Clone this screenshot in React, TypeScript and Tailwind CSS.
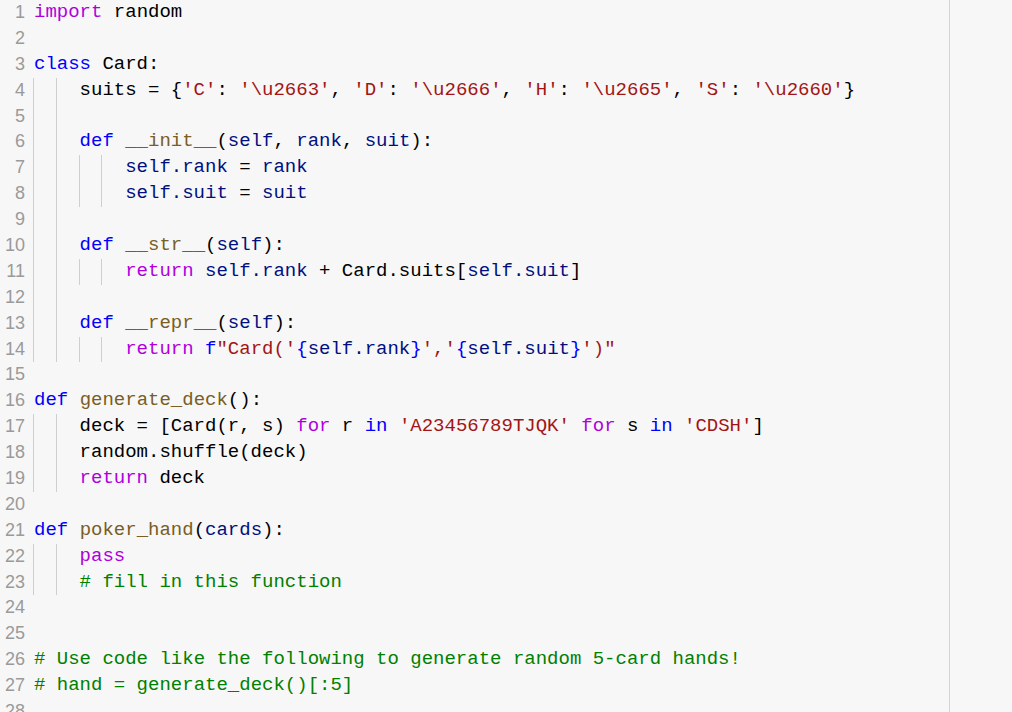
import React from "react"

type Tok = [string, string]

// token colours
const C: Record<string, string> = {
	t: "text-[#000000]",
	k: "text-[#af00db]",
	b: "text-[#0000ff]",
	f: "text-[#795e26]",
	v: "text-[#001080]",
	s: "text-[#a31515]",
	c: "text-[#008000]",
}

// [guides, tokens]
const lines: [number, Tok[]][] = [
	[0, [["k", "import"], ["t", " random"]]],
	[0, []],
	[0, [["b", "class"], ["t", " Card:"]]],
	[2, [["t", "suits = {"], ["s", "'C'"], ["t", ": "], ["s", "'\\u2663'"], ["t", ", "], ["s", "'D'"], ["t", ": "], ["s", "'\\u2666'"], ["t", ", "], ["s", "'H'"], ["t", ": "], ["s", "'\\u2665'"], ["t", ", "], ["s", "'S'"], ["t", ": "], ["s", "'\\u2660'"], ["t", "}"]]],
	[2, []],
	[2, [["b", "def"], ["t", " "], ["f", "__init__"], ["t", "("], ["v", "self"], ["t", ", "], ["v", "rank"], ["t", ", "], ["v", "suit"], ["t", "):"]]],
	[4, [["v", "self.rank"], ["t", " = "], ["v", "rank"]]],
	[4, [["v", "self.suit"], ["t", " = "], ["v", "suit"]]],
	[2, []],
	[2, [["b", "def"], ["t", " "], ["f", "__str__"], ["t", "("], ["v", "self"], ["t", "):"]]],
	[4, [["k", "return"], ["t", " "], ["v", "self.rank"], ["t", " + Card.suits["], ["v", "self.suit"], ["t", "]"]]],
	[2, []],
	[2, [["b", "def"], ["t", " "], ["f", "__repr__"], ["t", "("], ["v", "self"], ["t", "):"]]],
	[4, [["k", "return"], ["t", " "], ["b", "f"], ["s", "\"Card('"], ["b", "{"], ["v", "self.rank"], ["b", "}"], ["s", "','"], ["b", "{"], ["v", "self.suit"], ["b", "}"], ["s", "')\""]]],
	[0, []],
	[0, [["b", "def"], ["t", " "], ["f", "generate_deck"], ["t", "():"]]],
	[2, [["t", "deck = [Card(r, s) "], ["k", "for"], ["t", " r "], ["b", "in"], ["t", " "], ["s", "'A23456789TJQK'"], ["t", " "], ["k", "for"], ["t", " s "], ["b", "in"], ["t", " "], ["s", "'CDSH'"], ["t", "]"]]],
	[2, [["t", "random.shuffle(deck)"]]],
	[2, [["k", "return"], ["t", " deck"]]],
	[0, []],
	[0, [["b", "def"], ["t", " "], ["f", "poker_hand"], ["t", "("], ["v", "cards"], ["t", "):"]]],
	[2, [["k", "pass"]]],
	[2, [["c", "# fill in this function"]]],
	[0, []],
	[0, []],
	[0, [["c", "# Use code like the following to generate random 5-card hands!"]]],
	[0, [["c", "# hand = generate_deck()[:5]"]]],
	[0, []],
]

const App = () => {
	return (
		<div className="relative w-[1012px] h-[712px] overflow-hidden bg-[#f7f7f7]">
			{/* print margin */}
			<div className="absolute top-0 bottom-0 left-[949px] w-px bg-[#d4d4d4]" />

			<div className="flex flex-col">
				{lines.map(([g, toks], i) => (
					<div key={i} className="flex h-[25.9px] items-stretch">
						<div
							className="w-[25px] shrink-0 text-right text-[18px] leading-[25.9px] text-[#9a9a9a]"
							style={{ fontFamily: '"Liberation Sans", Arial, sans-serif' }}
						>
							{i + 1}
						</div>
						<div
							className="ml-[8px] flex items-stretch whitespace-pre text-[19px] leading-[25.9px]"
							style={{ fontFamily: '"Liberation Mono", "Courier New", monospace' }}
						>
							{Array.from({ length: g }).map((_, j) => (
								<span key={j} className="w-[2ch] border-l border-[#cfcfcf]" />
							))}
							<span className="pl-px">
								{toks.map(([k, t], j) => (
									<span key={j} className={C[k]}>
										{t}
									</span>
								))}
							</span>
						</div>
					</div>
				))}
			</div>
		</div>
	)
}

export default App
